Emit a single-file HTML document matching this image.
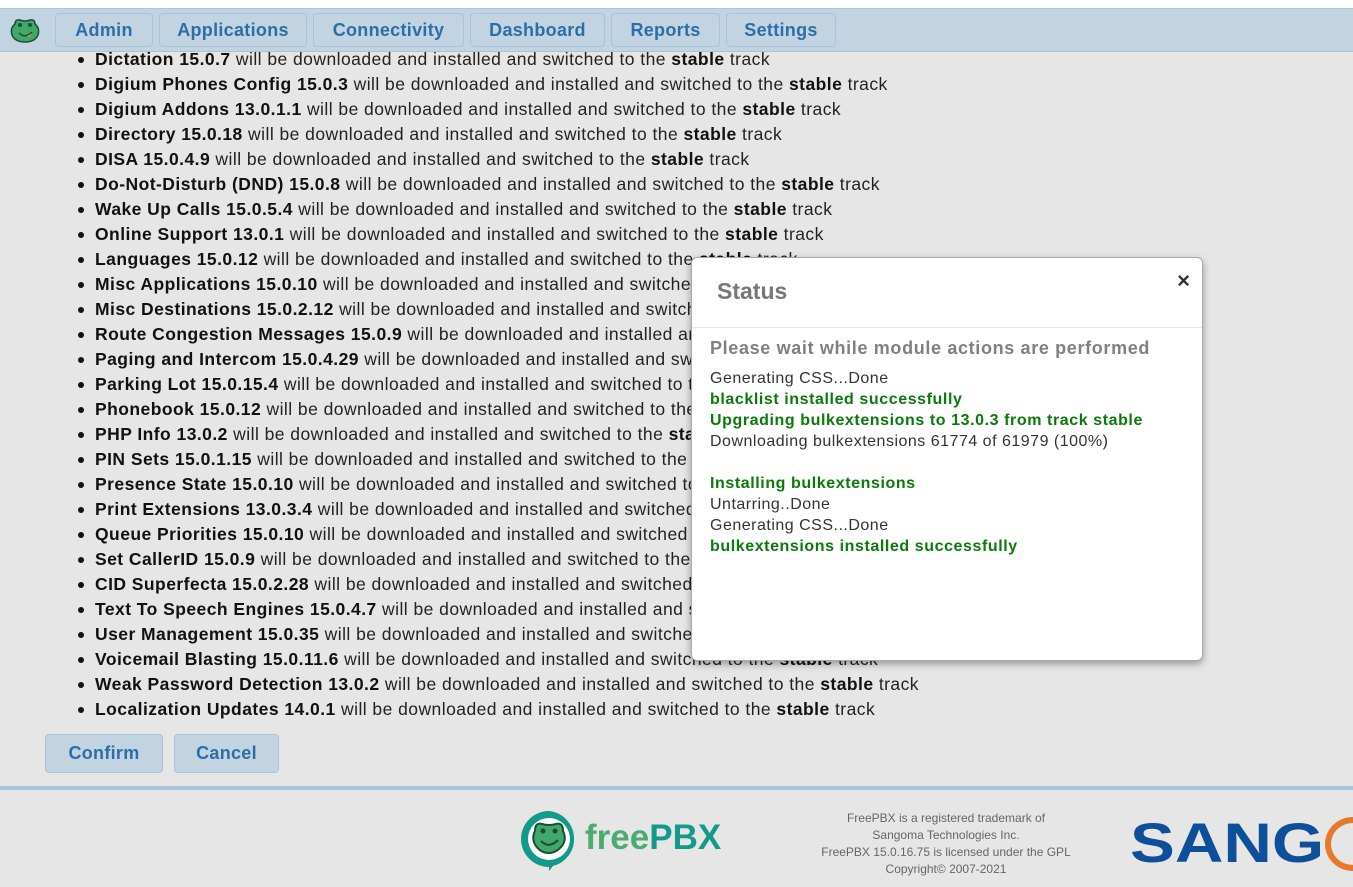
<!DOCTYPE html>
<html><head><meta charset="utf-8"><style>
*{margin:0;padding:0;box-sizing:border-box}
body{width:1353px;height:887px;overflow:hidden;background:#e6e6e6;font-family:"Liberation Sans",sans-serif;position:relative;color:#222}
.top{position:absolute;left:0;top:0;width:1353px;height:8px;background:#fff}
.nav{position:absolute;left:0;top:8px;width:1353px;height:44px;background:#c2d3e1;border-top:1px solid #b0c6d8;border-bottom:1px solid #a9c2d6}
.nb{position:absolute;top:4px;height:34px;border:1px solid #a9c4da;border-radius:4px;background:#c2d3e1;color:#2d6ea8;font-weight:bold;font-size:18px;line-height:32px;text-align:center;letter-spacing:0.3px}
.li{position:absolute;left:95px;font-size:17.5px;line-height:24px;white-space:nowrap;color:#222;letter-spacing:0.45px}
.li b{color:#111}
.li:before{content:"";position:absolute;left:-17px;top:10px;width:6px;height:6px;border-radius:50%;background:#111}
.btn{position:absolute;top:734px;height:39px;border:1px solid #a9c4da;border-radius:4px;background:#c2d3e1;color:#2d6ea8;font-weight:bold;font-size:18px;line-height:37px;text-align:center;letter-spacing:0.3px}
.modal{position:absolute;left:691px;top:257px;width:512px;height:404px;background:#fff;border:1px solid #aaa;border-radius:6px;box-shadow:0 3px 8px rgba(0,0,0,.35)}
.ml{position:absolute;left:18px;font-size:16px;line-height:21px;white-space:nowrap;color:#333;letter-spacing:0.5px}
.g{color:#0a7a0a;font-weight:bold;letter-spacing:0.58px}
.foot{position:absolute;left:0;top:786px;width:1353px;height:4px;background:#a9c4da}
.ft{position:absolute;left:796px;top:810px;width:300px;text-align:center;font-size:12px;line-height:17px;color:#666}
</style></head><body>
<div class="top"></div>
<div class="nav">
<svg style="position:absolute;left:9px;top:9px" width="32" height="26" viewBox="0 0 32 26"><path d="M6 6 Q6 1 11 2 Q16 4 21 2 Q26 1 26 6 Q31 10 29 17 Q26 24 16 24 Q6 24 3 17 Q1 10 6 6Z" fill="#3fa86a" stroke="#1d4d33" stroke-width="1.5"/><circle cx="11" cy="7" r="2" fill="#1d4d33"/><circle cx="21" cy="7" r="2" fill="#1d4d33"/><path d="M10 15 Q16 21 23 14" fill="none" stroke="#1d4d33" stroke-width="1.5"/><path d="M18 18 l4 -2 l0 3z" fill="#e08a3a"/></svg>
<div class="nb" style="left:55px;width:98px">Admin</div>
<div class="nb" style="left:159px;width:148px">Applications</div>
<div class="nb" style="left:313px;width:151px">Connectivity</div>
<div class="nb" style="left:470px;width:135px">Dashboard</div>
<div class="nb" style="left:611px;width:109px">Reports</div>
<div class="nb" style="left:726px;width:110px">Settings</div>
</div>
<div class="li" style="top:47px;clip-path:inset(5px -30px 0 -30px)"><b>Dictation 15.0.7</b> will be downloaded and installed and switched to the <b>stable</b> track</div>
<div class="li" style="top:72px"><b>Digium Phones Config 15.0.3</b> will be downloaded and installed and switched to the <b>stable</b> track</div>
<div class="li" style="top:97px"><b>Digium Addons 13.0.1.1</b> will be downloaded and installed and switched to the <b>stable</b> track</div>
<div class="li" style="top:122px"><b>Directory 15.0.18</b> will be downloaded and installed and switched to the <b>stable</b> track</div>
<div class="li" style="top:147px"><b>DISA 15.0.4.9</b> will be downloaded and installed and switched to the <b>stable</b> track</div>
<div class="li" style="top:172px"><b>Do-Not-Disturb (DND) 15.0.8</b> will be downloaded and installed and switched to the <b>stable</b> track</div>
<div class="li" style="top:197px"><b>Wake Up Calls 15.0.5.4</b> will be downloaded and installed and switched to the <b>stable</b> track</div>
<div class="li" style="top:222px"><b>Online Support 13.0.1</b> will be downloaded and installed and switched to the <b>stable</b> track</div>
<div class="li" style="top:247px"><b>Languages 15.0.12</b> will be downloaded and installed and switched to the <b>stable</b> track</div>
<div class="li" style="top:272px"><b>Misc Applications 15.0.10</b> will be downloaded and installed and switched to the <b>stable</b> track</div>
<div class="li" style="top:297px"><b>Misc Destinations 15.0.2.12</b> will be downloaded and installed and switched to the <b>stable</b> track</div>
<div class="li" style="top:322px"><b>Route Congestion Messages 15.0.9</b> will be downloaded and installed and switched to the <b>stable</b> track</div>
<div class="li" style="top:347px"><b>Paging and Intercom 15.0.4.29</b> will be downloaded and installed and switched to the <b>stable</b> track</div>
<div class="li" style="top:372px"><b>Parking Lot 15.0.15.4</b> will be downloaded and installed and switched to the <b>stable</b> track</div>
<div class="li" style="top:397px"><b>Phonebook 15.0.12</b> will be downloaded and installed and switched to the <b>stable</b> track</div>
<div class="li" style="top:422px"><b>PHP Info 13.0.2</b> will be downloaded and installed and switched to the <b>stable</b> track</div>
<div class="li" style="top:447px"><b>PIN Sets 15.0.1.15</b> will be downloaded and installed and switched to the <b>stable</b> track</div>
<div class="li" style="top:472px"><b>Presence State 15.0.10</b> will be downloaded and installed and switched to the <b>stable</b> track</div>
<div class="li" style="top:497px"><b>Print Extensions 13.0.3.4</b> will be downloaded and installed and switched to the <b>stable</b> track</div>
<div class="li" style="top:522px"><b>Queue Priorities 15.0.10</b> will be downloaded and installed and switched to the <b>stable</b> track</div>
<div class="li" style="top:547px"><b>Set CallerID 15.0.9</b> will be downloaded and installed and switched to the <b>stable</b> track</div>
<div class="li" style="top:572px"><b>CID Superfecta 15.0.2.28</b> will be downloaded and installed and switched to the <b>stable</b> track</div>
<div class="li" style="top:597px"><b>Text To Speech Engines 15.0.4.7</b> will be downloaded and installed and switched to the <b>stable</b> track</div>
<div class="li" style="top:622px"><b>User Management 15.0.35</b> will be downloaded and installed and switched to the <b>stable</b> track</div>
<div class="li" style="top:647px"><b>Voicemail Blasting 15.0.11.6</b> will be downloaded and installed and switched to the <b>stable</b> track</div>
<div class="li" style="top:672px"><b>Weak Password Detection 13.0.2</b> will be downloaded and installed and switched to the <b>stable</b> track</div>
<div class="li" style="top:697px"><b>Localization Updates 14.0.1</b> will be downloaded and installed and switched to the <b>stable</b> track</div>
<div class="btn" style="left:45px;width:118px">Confirm</div>
<div class="btn" style="left:174px;width:105px">Cancel</div>
<div class="foot"></div>
<svg style="position:absolute;left:519px;top:809px" width="62" height="64" viewBox="0 0 62 64"><path d="M30 2 A28 28 0 1 0 30 58 L30 62 L34 57 A28 28 0 0 0 30 2Z" fill="#129a8a"/><circle cx="30" cy="30" r="21" fill="#fff"/><path d="M16 22 Q16 13 23 15 Q30 17 37 15 Q44 13 44 22 Q48 30 43 37 Q37 44 30 44 Q22 44 17 37 Q12 30 16 22Z" fill="#3fa86a" stroke="#1d4d33" stroke-width="2"/><circle cx="24" cy="22" r="2.5" fill="#1d4d33"/><circle cx="36" cy="22" r="2.5" fill="#1d4d33"/><path d="M22 32 Q30 40 39 31" fill="none" stroke="#1d4d33" stroke-width="2"/></svg>
<div style="position:absolute;left:585px;top:818px;font-weight:bold;font-size:35px;line-height:40px"><span style="color:#4cab72">free</span><span style="color:#129a8a">PBX</span></div>
<div class="ft">FreePBX is a registered trademark of<br>Sangoma Technologies Inc.<br>FreePBX 15.0.16.75 is licensed under the GPL<br>Copyright© 2007-2021</div>
<div style="position:absolute;left:1130px;top:813px;font-weight:bold;font-size:56px;line-height:60px;color:#0e4f9a;transform:scaleX(1.2);transform-origin:left top">SANG</div>
<div style="position:absolute;left:1325px;top:817px;width:56px;height:54px;border:6px solid #e8792a;border-radius:50%"></div>
<div class="modal">
<div style="position:absolute;left:25px;top:20px;font-size:23px;font-weight:bold;color:#777">Status</div>
<div style="position:absolute;right:12px;top:10px;font-size:22px;font-weight:bold;color:#333">×</div>
<div style="position:absolute;left:0;top:69px;width:510px;height:1px;background:#e5e5e5"></div>
<div class="ml" style="top:80px;font-size:18px;font-weight:bold;color:#808080;letter-spacing:0.65px">Please wait while module actions are performed</div>
<div class="ml" style="top:110px">Generating CSS...Done</div>
<div class="ml g" style="top:131px">blacklist installed successfully</div>
<div class="ml g" style="top:152px">Upgrading bulkextensions to 13.0.3 from track stable</div>
<div class="ml" style="top:173px">Downloading bulkextensions 61774 of 61979 (100%)</div>
<div class="ml g" style="top:215px">Installing bulkextensions</div>
<div class="ml" style="top:236px">Untarring..Done</div>
<div class="ml" style="top:257px">Generating CSS...Done</div>
<div class="ml g" style="top:278px">bulkextensions installed successfully</div>
</div>
</body></html>
